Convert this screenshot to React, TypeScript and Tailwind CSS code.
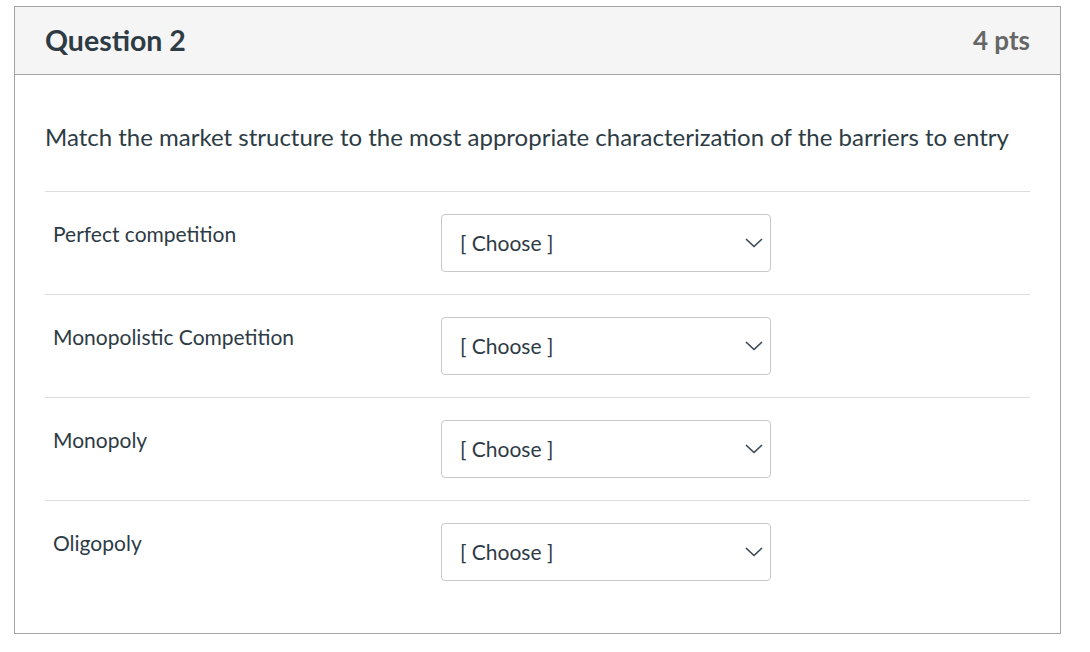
export default function App() {
  const rows = ['Perfect competition', 'Monopolistic Competition', 'Monopoly', 'Oligopoly'];

  return (
    <div className="min-h-[652px] bg-white pt-[6px] pl-[14px] font-['Lato',sans-serif] text-[#2d3b45]">
      <div className="w-[1047px] h-[628px] border border-[#a5a5a5] bg-white">
        <div className="h-[68px] bg-[#f5f5f5] border-b border-[#a5a5a5] flex items-center justify-between pl-[30px] pr-[30px]">
          <h2 className="text-[28.5px] font-bold">Question 2</h2>
          <span className="text-[26px] font-bold text-[#666666]">4 pts</span>
        </div>

        <div className="px-[30px]">
          <p className="pt-[47px] pb-[39px] text-[24px] leading-[30px]">
            Match the market structure to the most appropriate characterization of the barriers to entry
          </p>

          {rows.map((label, i) => (
            <div key={i} className="border-t border-[#dcdcdc] flex items-start pt-[22px] pb-[22px]">
              <div className="w-[396px] pl-[8px] pt-[7px] text-[21px] leading-[26px]">{label}</div>
              <div className="w-[330px] h-[58px] border border-[#c9c9c9] rounded-[4px] flex items-center justify-between pl-[18px] pr-[7px]">
                <span className="text-[21px] leading-[26px]">[ Choose ]</span>
                <svg width="18" height="10" viewBox="0 0 18 10" fill="none" className="mt-[-1px]">
                  <path d="M1.5 1.5l7.5 7 7.5-7" stroke="#3d4a55" strokeWidth="1.7" strokeLinecap="round" strokeLinejoin="round" />
                </svg>
              </div>
            </div>
          ))}
        </div>
      </div>
    </div>
  );
}
